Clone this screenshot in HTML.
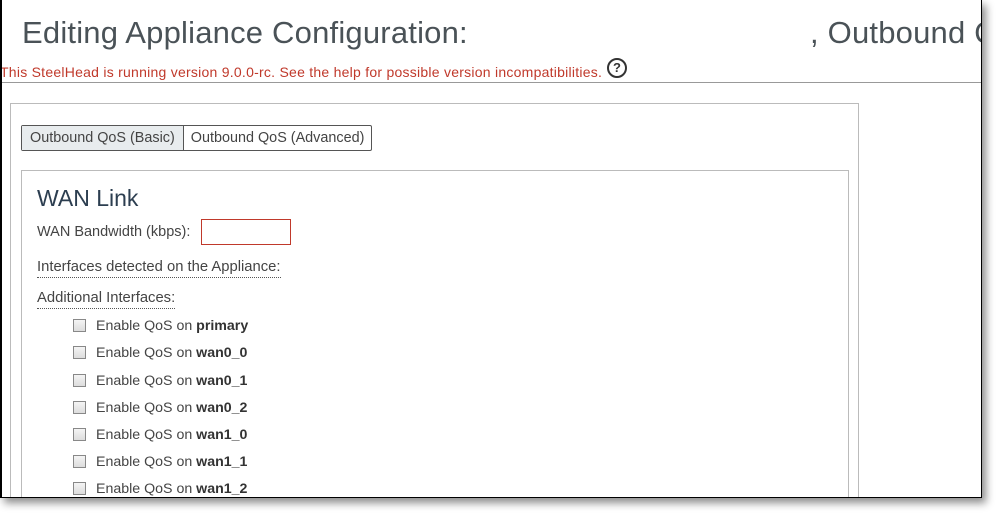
<!DOCTYPE html>
<html><head><style>
html,body{margin:0;padding:0}
body{width:997px;height:516px;background:#fff;position:relative;overflow:hidden;font-family:"Liberation Sans",sans-serif;color:#444}
.frame{position:absolute;left:0;top:0;width:979px;height:497px;border:1px solid #000;border-top:none;border-left:2px solid #000;background:#fff;box-shadow:4px 5px 8px rgba(0,0,0,.45);overflow:hidden}
.abs{position:absolute;white-space:nowrap}
h1{position:absolute;margin:0;font-weight:normal;font-size:31px;color:#4a5257;top:15px;white-space:nowrap;letter-spacing:.2px}
.cb{position:absolute;left:71px;width:11px;height:11px;border:1px solid #888;background:linear-gradient(#f4f4f4,#ddd)}
.lbl{position:absolute;left:94px;font-size:14.2px;color:#444;white-space:nowrap}
.lbl b{color:#333}
.dot{border-bottom:1px dotted #555;padding-bottom:2px}
</style></head><body>
<div class="frame">
<h1 style="left:20px">Editing Appliance Configuration:</h1>
<h1 style="left:808px">, Outbound QoS</h1>
<div class="abs" style="left:-2px;top:64px;font-size:14px;letter-spacing:.25px;color:#c0392b">This SteelHead is running version 9.0.0-rc. See the help for possible version incompatibilities.</div>
<div class="abs" style="left:605px;top:58px;width:16px;height:16px;border:2px solid #333;border-radius:50%;font-size:13px;font-weight:bold;text-align:center;line-height:16px;color:#333">?</div>
<div class="abs" style="left:0;top:82px;width:980px;height:1px;background:#999"></div>
<div class="abs" style="left:8px;top:103px;width:847px;height:420px;border:1px solid #bbb"></div>
<div class="abs" style="left:19px;top:125px;height:24px;border:1px solid #555;border-radius:2px;display:flex;font-size:14.4px;line-height:25px">
<div style="background:#e8ecee;border-right:1px solid #555;padding:0 8px">Outbound QoS (Basic)</div>
<div style="padding:0 7px">Outbound QoS (Advanced)</div></div>
<div class="abs" style="left:19px;top:170px;width:826px;height:400px;border:1px solid #bbb"></div>
<div class="abs" style="left:35px;top:185px;font-size:23px;color:#2c3e50">WAN Link</div>
<div class="abs" style="left:35px;top:224px;font-size:14.5px">WAN Bandwidth (kbps):</div>
<div class="abs" style="left:199px;top:219px;width:88px;height:24px;border:1px solid #c0392b"></div>
<div class="abs" style="left:35px;top:259px;font-size:14.8px"><span class="dot">Interfaces detected on the Appliance:</span></div>
<div class="abs" style="left:35px;top:290px;font-size:14.8px"><span class="dot">Additional Interfaces:</span></div>
<div class="cb" style="top:319px"></div><div class="lbl" style="top:318px">Enable QoS on <b>primary</b></div>
<div class="cb" style="top:346px"></div><div class="lbl" style="top:345px">Enable QoS on <b>wan0_0</b></div>
<div class="cb" style="top:374px"></div><div class="lbl" style="top:373px">Enable QoS on <b>wan0_1</b></div>
<div class="cb" style="top:401px"></div><div class="lbl" style="top:400px">Enable QoS on <b>wan0_2</b></div>
<div class="cb" style="top:428px"></div><div class="lbl" style="top:427px">Enable QoS on <b>wan1_0</b></div>
<div class="cb" style="top:455px"></div><div class="lbl" style="top:454px">Enable QoS on <b>wan1_1</b></div>
<div class="cb" style="top:482px"></div><div class="lbl" style="top:481px">Enable QoS on <b>wan1_2</b></div>
</div>
</body></html>
